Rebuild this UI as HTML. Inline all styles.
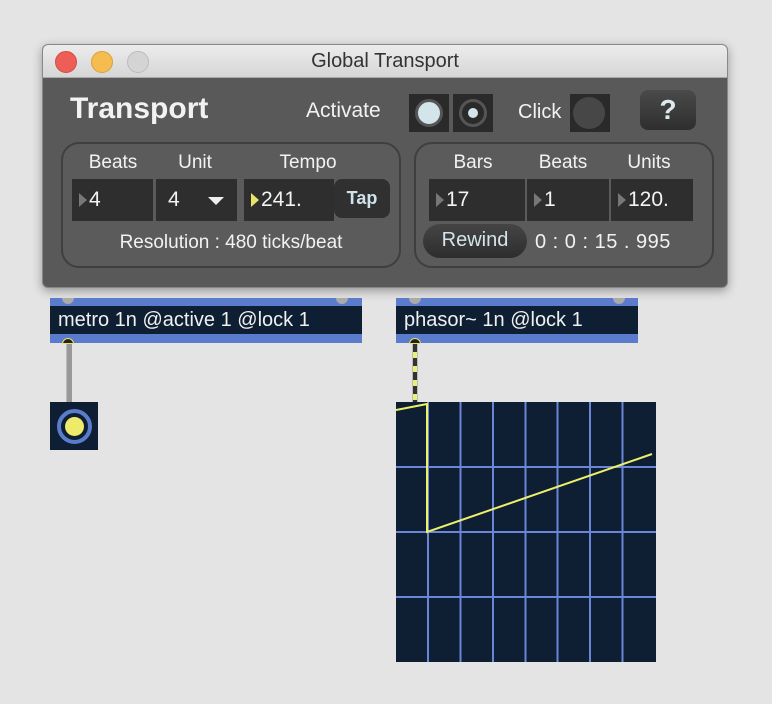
<!DOCTYPE html>
<html><head><style>
body{margin:0;width:772px;height:704px;background:#e4e4e4;position:relative;overflow:hidden;font-family:"Liberation Sans","DejaVu Sans",sans-serif}
.a{position:absolute}
.win{left:42px;top:44px;width:686px;height:244px;border-radius:6px;background:#595959;box-shadow:0 3px 10px rgba(0,0,0,.35);overflow:hidden;border:1px solid #888;box-sizing:border-box}
.tb{left:0;top:0;width:100%;height:32px;background:linear-gradient(#ececec,#d6d6d6);border-bottom:1px solid #aaa;text-align:center;font-size:20px;color:#333;line-height:32px}
.dot{width:20px;height:20px;border-radius:50%;top:6px}
.w{color:#f2f2f2}
.grp{border:2px solid #3f3f3f;border-radius:18px;background:#5b5b5b}
.nb{background:#2e2e2e;height:42px;color:#f3f3f3;font-size:21px;line-height:42px}
.tri{display:inline-block;width:0;height:0;border-top:7px solid transparent;border-bottom:7px solid transparent;border-left:8px solid #777;margin:0 2px 0 7px;vertical-align:-1px}
.lbl{font-size:19px;color:#f2f2f2;text-align:center}
.obj{height:45px;background:#5b7ccc}
.obj .in{position:absolute;left:0;right:0;top:8px;height:28px;background:#0e1e33;color:#f0f0f0;font-size:20px;line-height:28px;padding-left:8px}
.inlet{width:12px;height:6px;border-radius:0 0 6px 6px;background:#aaa;top:0}
</style></head><body>
<div class="a win">
 <div class="a tb">Global Transport</div>
 <div class="a dot" style="left:12px;background:#ed5f56;border:1px solid #d54a40"></div>
 <div class="a dot" style="left:48px;background:#f5bd4f;border:1px solid #d9a03a"></div>
 <div class="a dot" style="left:84px;background:#d4d4d4;border:1px solid #bbb"></div>
 <div class="a w" style="left:27px;top:47px;font-size:30px;font-weight:bold">Transport</div>
 <div class="a w" style="left:263px;top:54px;font-size:21px">Activate</div>
 <div class="a" style="left:366px;top:49px;width:40px;height:38px;background:#2a2a2a"><div class="a" style="left:6px;top:5px;width:22px;height:22px;border-radius:50%;background:#d3e4ea;border:3px solid #555"></div></div>
 <div class="a" style="left:410px;top:49px;width:40px;height:38px;background:#2a2a2a"><div class="a" style="left:6px;top:5px;width:22px;height:22px;border-radius:50%;background:#2a2a2a;border:3px solid #555"></div><div class="a" style="left:15px;top:14px;width:10px;height:10px;border-radius:50%;background:#d3e4ea"></div></div>
 <div class="a w" style="left:475px;top:56px;font-size:20px">Click</div>
 <div class="a" style="left:527px;top:49px;width:40px;height:38px;background:#2a2a2a"><div class="a" style="left:3px;top:3px;width:32px;height:32px;border-radius:50%;background:#474747"></div></div>
 <div class="a" style="left:597px;top:45px;width:56px;height:40px;border-radius:8px;background:linear-gradient(#4a4a4a,#2e2e2e);color:#dde9ee;font-size:28px;font-weight:bold;text-align:center;line-height:40px">?</div>

 <div class="a grp" style="left:18px;top:97px;width:336px;height:122px"></div>
 <div class="a lbl" style="left:30px;top:107px;width:80px">Beats</div>
 <div class="a lbl" style="left:112px;top:107px;width:80px">Unit</div>
 <div class="a lbl" style="left:200px;top:107px;width:130px">Tempo</div>
 <div class="a nb" style="left:29px;top:134px;width:81px"><span class="tri"></span>4</div>
 <div class="a nb" style="left:113px;top:134px;width:81px;padding-left:12px;box-sizing:border-box">4<span style="position:absolute;left:52px;top:18px;border-left:8px solid transparent;border-right:8px solid transparent;border-top:8px solid #eee"></span></div>
 <div class="a nb" style="left:201px;top:134px;width:90px"><span class="tri" style="border-left-color:#e8e46a;margin-left:7px"></span>241.</div>
 <div class="a" style="left:291px;top:134px;width:56px;height:39px;border-radius:8px;background:#303030;color:#cfe2ea;font-weight:bold;font-size:18px;text-align:center;line-height:38px">Tap</div>
 <div class="a lbl" style="left:20px;top:187px;width:336px">Resolution : 480 ticks/beat</div>

 <div class="a grp" style="left:371px;top:97px;width:296px;height:122px"></div>
 <div class="a lbl" style="left:390px;top:107px;width:80px">Bars</div>
 <div class="a lbl" style="left:480px;top:107px;width:80px">Beats</div>
 <div class="a lbl" style="left:566px;top:107px;width:80px">Units</div>
 <div class="a nb" style="left:386px;top:134px;width:96px"><span class="tri"></span>17</div>
 <div class="a nb" style="left:484px;top:134px;width:82px"><span class="tri"></span>1</div>
 <div class="a nb" style="left:568px;top:134px;width:82px"><span class="tri"></span>120.</div>
 <div class="a" style="left:380px;top:179px;width:104px;height:34px;border-radius:17px;background:linear-gradient(#454545,#2d2d2d);color:#d3e4ea;font-size:20px;text-align:center;line-height:32px">Rewind</div>
 <div class="a w" style="left:492px;top:186px;font-size:20px;letter-spacing:.5px">0 : 0 : 15 . 995</div>
</div>

<div class="a obj" style="left:50px;top:298px;width:312px"><div class="in">metro 1n @active 1 @lock 1</div></div>
<div class="a inlet" style="left:62px;top:298px"></div><div class="a inlet" style="left:336px;top:298px"></div>
<div class="a" style="left:62px;top:338px;width:12px;height:6px;border-radius:6px 6px 0 0;background:#222;border:1px solid #e8e46a;box-sizing:border-box"></div>
<div class="a" style="left:66px;top:344px;width:5px;height:58px;background:#999;border-left:1px solid #bbb"></div>
<div class="a" style="left:50px;top:402px;width:48px;height:48px;background:#0e1e33"><div class="a" style="left:7px;top:7px;width:27px;height:27px;border-radius:50%;border:4px solid #5b7ccc;box-sizing:content-box"></div><div class="a" style="left:15px;top:15px;width:19px;height:19px;border-radius:50%;background:#eeea6a"></div></div>

<div class="a obj" style="left:396px;top:298px;width:242px"><div class="in">phasor~ 1n @lock 1</div></div>
<div class="a inlet" style="left:409px;top:298px"></div><div class="a inlet" style="left:613px;top:298px"></div>
<div class="a" style="left:409px;top:338px;width:12px;height:6px;border-radius:6px 6px 0 0;background:#222;border:1px solid #e8e46a;box-sizing:border-box"></div>
<div class="a" style="left:412px;top:344px;width:6px;height:58px;background:#bbb"><div class="a" style="left:1px;top:0;width:4px;height:58px;background:repeating-linear-gradient(#333 0 8px,#e8f07a 8px 14px)"></div></div>

<svg class="a" style="left:396px;top:402px" width="260" height="260">
<rect width="260" height="260" fill="#0e1e33"/>
<g stroke="#6a86d8" stroke-width="2">
<line x1="32" y1="0" x2="32" y2="260"/><line x1="64.5" y1="0" x2="64.5" y2="260"/><line x1="97" y1="0" x2="97" y2="260"/><line x1="129.5" y1="0" x2="129.5" y2="260"/><line x1="161.5" y1="0" x2="161.5" y2="260"/><line x1="194" y1="0" x2="194" y2="260"/><line x1="226.5" y1="0" x2="226.5" y2="260"/>
<line x1="0" y1="65" x2="260" y2="65"/><line x1="0" y1="130" x2="260" y2="130"/><line x1="0" y1="195" x2="260" y2="195"/>
</g>
<polyline fill="none" stroke="#eef06a" stroke-width="2" points="0,8 31,2 31,130 256,52"/>
</svg>
</body></html>
